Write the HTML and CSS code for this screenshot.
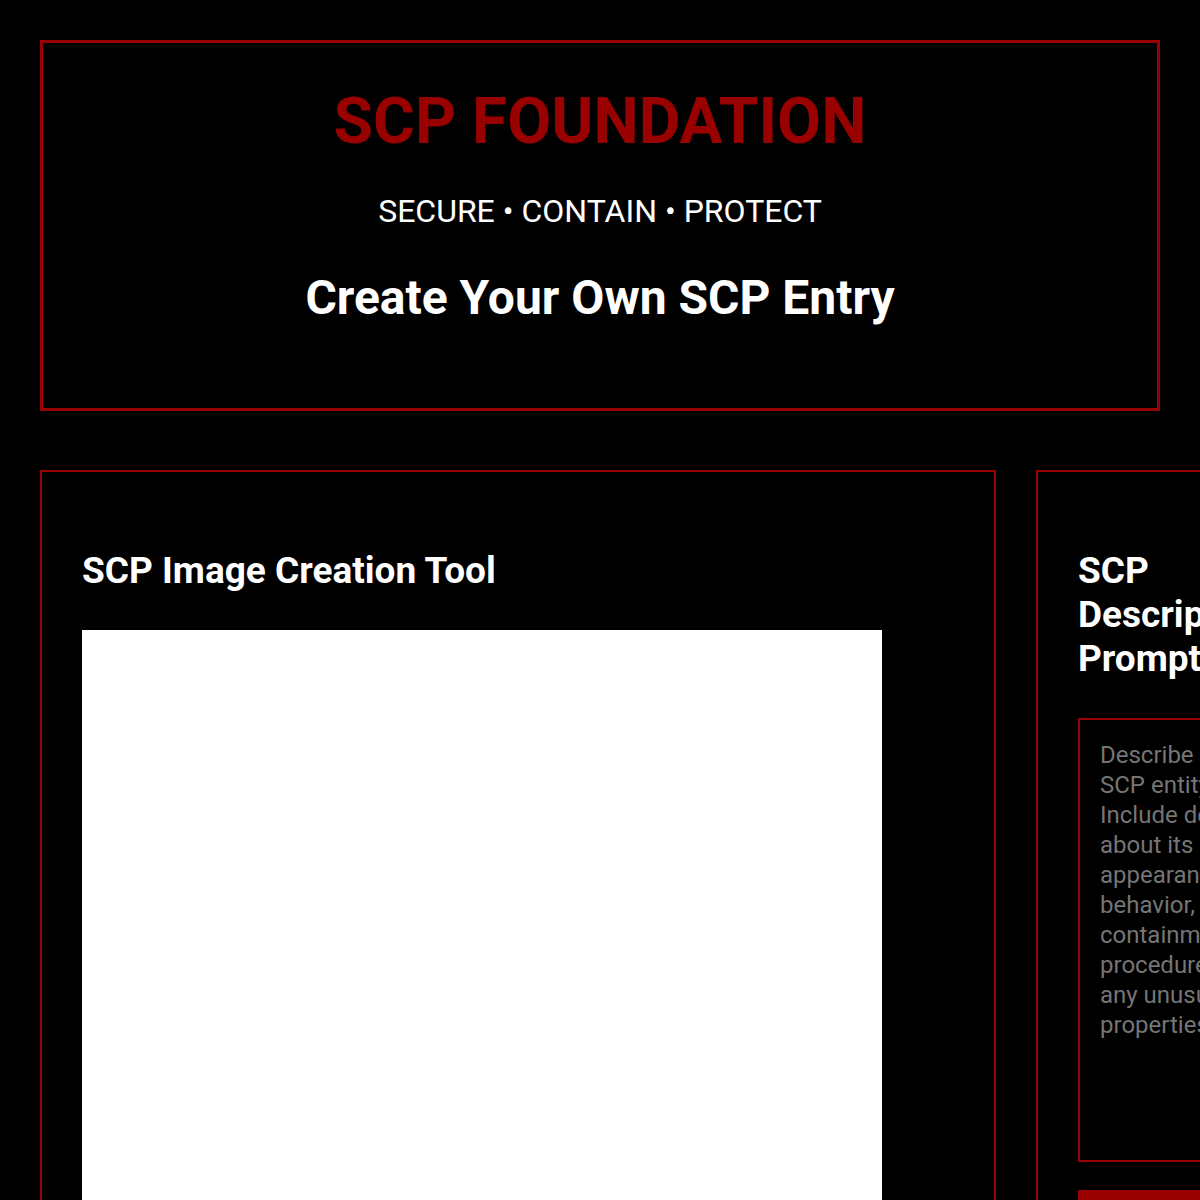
FILE: index.html
```html
<!DOCTYPE html>
<html lang="en">
<head>
  <meta charset="UTF-8">
  <title>SCP Foundation - Create Your Own SCP Entry</title>
  <link rel="stylesheet" href="styles.css">
</head>
<body>

  <!-- Header -->
  <header class="site-header">
    <h1 class="logo">SCP FOUNDATION</h1>
    <p class="motto">SECURE &bull; CONTAIN &bull; PROTECT</p>
    <h2 class="page-title">Create Your Own SCP Entry</h2>
  </header>

  <!-- Tools -->
  <main class="workspace">
    <section class="panel panel-image">
      <h3 class="panel-title">SCP Image Creation Tool</h3>
      <div class="canvas"></div>
    </section>

    <section class="panel panel-prompt">
      <h3 class="panel-title">SCP Description Prompt</h3>
      <textarea class="prompt" placeholder="Describe your SCP entity. Include details about its appearance, behavior, containment procedures, and any unusual properties."></textarea>
      <button class="btn" type="button">Generate Entry</button>
    </section>
  </main>

</body>
</html>
```

FILE: styles.css
```css
body {
  margin: 0;
  padding: 40px;
  background: #000;
  color: #fff;
  font-family: Roboto, 'Liberation Sans', sans-serif;
}
.site-header {
  border: 3px solid #990000;
  padding: 41px 40px 82px;
  text-align: center;
}
.logo {
  margin: 0;
  color: #990000;
  font-size: 64px;
  font-weight: bold;
}
.motto {
  margin: 33px 0 0;
  font-size: 32px;
}
.page-title {
  margin: 39px 0 0;
  font-size: 48px;
  font-weight: bold;
}
.workspace {
  display: flex;
  gap: 40px;
  margin-top: 59px;
}
.panel {
  flex: none;
  border: 2px solid #990000;
  padding: 40px;
}
.panel-image {
  width: 872px;
}
.panel-prompt {
  width: 224px;
}
.panel-title {
  margin: 37px 0 37px;
  font-size: 37px;
  line-height: 44px;
  font-weight: bold;
}
.canvas {
  width: 800px;
  height: 600px;
  background: #fff;
}
.prompt {
  display: block;
  box-sizing: border-box;
  width: 100%;
  height: 444px;
  padding: 20px;
  border: 2px solid #990000;
  background: #000;
  color: #fff;
  font-family: Roboto, 'Liberation Sans', sans-serif;
  font-size: 24px;
  line-height: 30px;
  resize: none;
}
.prompt::placeholder {
  color: #757575;
}
.btn {
  display: block;
  width: 100%;
  margin-top: 28px;
  padding: 20px;
  border: none;
  background: #990000;
  color: #fff;
  font-family: Roboto, 'Liberation Sans', sans-serif;
  font-size: 24px;
  font-weight: bold;
}
```
